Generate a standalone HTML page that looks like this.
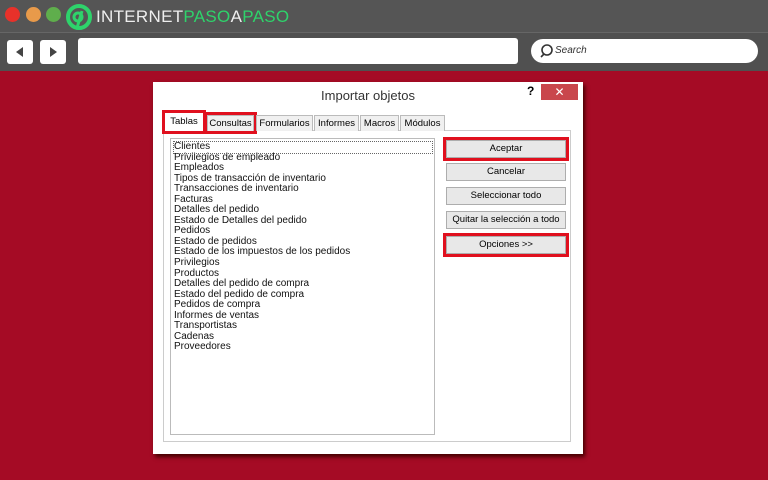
<!DOCTYPE html>
<html><head><style>
body{margin:0;width:768px;height:480px;background:#a50b25;position:relative;overflow:hidden;font-family:"Liberation Sans",sans-serif}
.top{position:absolute;left:0;top:0;width:768px;height:32px;background:#555}
.nav{position:absolute;left:0;top:32px;width:768px;height:38px;background:#505050;border-top:1px solid #666}
.dot{position:absolute;top:7px;width:15px;height:15px;border-radius:50%}
.box{position:absolute;background:#fff;border-radius:3px}
.dlg{position:absolute;left:153px;top:82px;width:430px;height:372px;background:#fff;box-shadow:2px 3px 4px #400;font-size:10px}
.abs{position:absolute}
.tab{position:absolute;top:33px;height:15px;border:1px solid #bbb;border-bottom:none;background:#f0f0f0;font-size:9.5px;line-height:15px;text-align:center}
.btn{position:absolute;left:293px;width:118px;height:16px;background:#e8e8e8;border:1px solid #adadad;font-size:9.5px;text-align:center;line-height:16px}
.red{outline:3px solid #e0101e;outline-offset:0}
.list div{height:10.55px;line-height:10.55px}
</style></head><body>
<div class="top">
<div class="dot" style="left:5px;background:#e8312a"></div>
<div class="dot" style="left:26px;background:#e89a4a"></div>
<div class="dot" style="left:46px;background:#5fae4c"></div>
<svg class="abs" style="left:64px;top:3px" width="30" height="28" viewBox="0 0 30 28"><circle cx="15" cy="14" r="11" fill="none" stroke="#2ed36b" stroke-width="4"/><circle cx="14" cy="14" r="4" fill="none" stroke="#2ed36b" stroke-width="3"/><path d="M18 8 L13 25" stroke="#2ed36b" stroke-width="3"/></svg>
<div class="abs" style="left:96px;top:7px;font-size:17px;letter-spacing:0.3px;color:#eee">INTERNET<span style="color:#2ed36b">PASO</span>A<span style="color:#2ed36b">PASO</span></div>
</div>
<div class="nav">
<div class="box" style="left:7px;top:7px;width:26px;height:24px"><svg width="26" height="24"><path d="M9 12 L16 7 L16 17Z" fill="#444"/></svg></div>
<div class="box" style="left:40px;top:7px;width:26px;height:24px"><svg width="26" height="24"><path d="M17 12 L10 7 L10 17Z" fill="#444"/></svg></div>
<div class="box" style="left:78px;top:5px;width:440px;height:26px"></div>
<div class="box" style="left:531px;top:6px;width:227px;height:24px;border-radius:12px"><svg class="abs" style="left:7px;top:4px" width="16" height="16"><circle cx="9" cy="7" r="5" fill="none" stroke="#333" stroke-width="1.6"/><path d="M6 11 L3 14" stroke="#333" stroke-width="1.6"/></svg><span class="abs" style="left:24px;top:6px;font-size:10px;font-style:italic;color:#333">Search</span></div>
</div>
<div class="dlg">
<div class="abs" style="left:0;width:430px;top:6px;text-align:center;font-size:13px;color:#333">Importar objetos</div>
<div class="abs" style="left:374px;top:2px;font-size:12px;font-weight:bold">?</div>
<div class="abs" style="left:388px;top:2px;width:37px;height:16px;background:#c9464c;color:#fff;text-align:center;font-size:12px;line-height:16px">✕</div>
<div class="abs" style="left:10px;top:48px;width:406px;height:310px;border:1px solid #ccc"></div>
<div class="tab red" style="left:12px;top:31px;height:17px;width:36px;background:#fff;border-color:#fff">Tablas</div>
<div class="tab red" style="left:54px;width:45px">Consultas</div>
<div class="tab" style="left:103px;width:55px">Formularios</div>
<div class="tab" style="left:161px;width:43px">Informes</div>
<div class="tab" style="left:207px;width:37px">Macros</div>
<div class="tab" style="left:247px;width:43px">Módulos</div>
<div class="abs list" style="left:17px;top:56px;width:265px;height:297px;border:1px solid #bbb;padding:3px 3px;box-sizing:border-box;color:#111">
<div style="outline:1px dotted #666;width:258px">Clientes</div><div>Privilegios de empleado</div><div>Empleados</div><div>Tipos de transacción de inventario</div><div>Transacciones de inventario</div><div>Facturas</div><div>Detalles del pedido</div><div>Estado de Detalles del pedido</div><div>Pedidos</div><div>Estado de pedidos</div><div>Estado de los impuestos de los pedidos</div><div>Privilegios</div><div>Productos</div><div>Detalles del pedido de compra</div><div>Estado del pedido de compra</div><div>Pedidos de compra</div><div>Informes de ventas</div><div>Transportistas</div><div>Cadenas</div><div>Proveedores</div>
</div>
<div class="btn red" style="top:58px">Aceptar</div>
<div class="btn" style="top:81px">Cancelar</div>
<div class="btn" style="top:105px">Seleccionar todo</div>
<div class="btn" style="top:129px">Quitar la selección a todo</div>
<div class="btn red" style="top:154px">Opciones &gt;&gt;</div>
</div>
</body></html>
